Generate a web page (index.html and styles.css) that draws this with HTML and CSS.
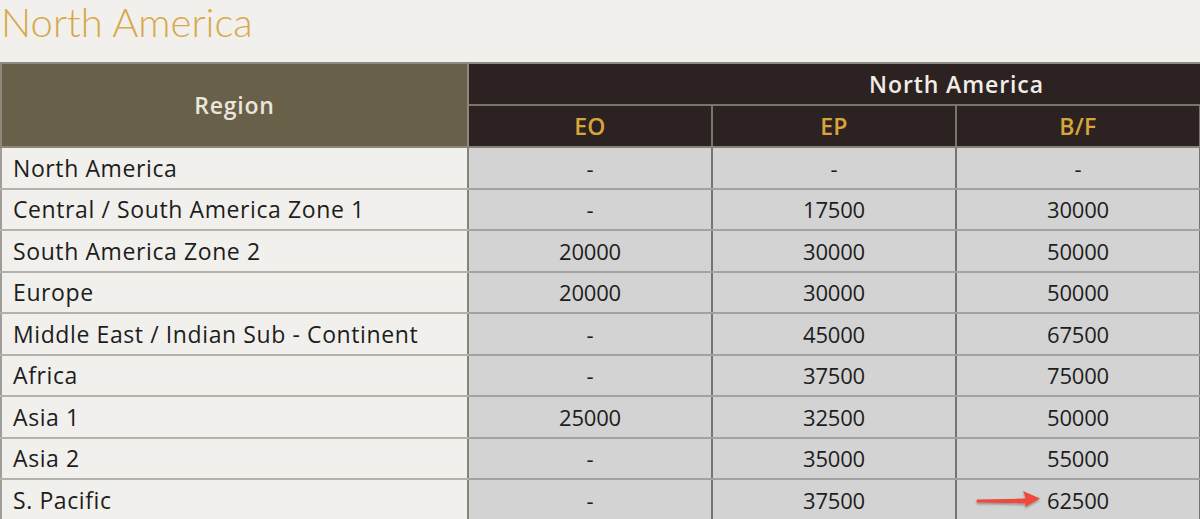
FILE: index.html
```html
<!DOCTYPE html>
<html lang="en">
<head>
<meta charset="utf-8">
<title>North America</title>
<link rel="stylesheet" href="styles.css">
</head>
<body>
<h1 class="title">North America</h1>
<div class="table-wrap">
<table class="award">
  <colgroup>
    <col class="c-region"><col class="c-data"><col class="c-data"><col class="c-data"><col class="c-data">
  </colgroup>
  <thead>
    <tr class="h1row">
      <th class="region-h" rowspan="2">Region</th>
      <th class="group-h" colspan="4">North America</th>
    </tr>
    <tr class="h2row">
      <th class="sub-h">EO</th>
      <th class="sub-h">EP</th>
      <th class="sub-h">B/F</th>
      <th class="sub-h"></th>
    </tr>
  </thead>
  <tbody>
    <tr><td class="reg">North America</td><td>-</td><td>-</td><td>-</td><td></td></tr>
    <tr><td class="reg">Central / South America Zone 1</td><td>-</td><td>17500</td><td>30000</td><td></td></tr>
    <tr><td class="reg">South America Zone 2</td><td>20000</td><td>30000</td><td>50000</td><td></td></tr>
    <tr><td class="reg">Europe</td><td>20000</td><td>30000</td><td>50000</td><td></td></tr>
    <tr><td class="reg">Middle East / Indian Sub - Continent</td><td>-</td><td>45000</td><td>67500</td><td></td></tr>
    <tr><td class="reg">Africa</td><td>-</td><td>37500</td><td>75000</td><td></td></tr>
    <tr><td class="reg">Asia 1</td><td>25000</td><td>32500</td><td>50000</td><td></td></tr>
    <tr><td class="reg">Asia 2</td><td>-</td><td>35000</td><td>55000</td><td></td></tr>
    <tr><td class="reg">S. Pacific</td><td>-</td><td>37500</td><td class="marked">62500<svg class="arrow" width="70" height="24" viewBox="0 0 70 24"><defs><filter id="sh" x="-20%" y="-50%" width="140%" height="200%"><feDropShadow dx="0" dy="1.5" stdDeviation="1.2" flood-color="#000" flood-opacity="0.35"/></filter></defs><g filter="url(#sh)"><path d="M3 11.4 Q2 13 3 14.6 L52 15.4 L52 10.6 Z" fill="#ef493e"/><path d="M49 3 L66 10.5 L51 19 Q53 11 49 3 Z" fill="#ef493e"/></g></svg></td><td></td></tr>
  </tbody>
</table>
</div>
</body>
</html>
```
FILE: styles.css
```css
html, body {
  margin: 0;
  padding: 0;
}
body {
  background: #f1f0ec;
  overflow: hidden;
  width: 1200px;
  height: 519px;
  font-family: "Open Sans", "Liberation Sans", sans-serif;
}
.title {
  margin: 0;
  height: 62px;
  padding-left: 1px;
  font-family: Lato, "Liberation Sans", sans-serif;
  font-weight: 300;
  font-size: 40px;
  line-height: 44px;
  color: #d8a84c;
}
.table-wrap {
  width: 1200px;
  overflow: hidden;
}
.award {
  width: 1443px;
  table-layout: fixed;
  border-collapse: collapse;
  font-size: 22px;
  color: #1d1d1d;
}
.c-region { width: 467px; }
.c-data { width: 244px; }
.award th {
  font-weight: 600;
  font-size: 23px;
  padding: 0;
  text-align: center;
  vertical-align: middle;
}
.h1row, .h2row { height: 42px; }
.region-h {
  background: #686049;
  color: #ebe6db;
  border: 2px solid #8d877c;
  border-top-color: #8f8b84;
  letter-spacing: 0.8px;
}
.group-h {
  background: #2b2221;
  color: #f1ede6;
  border-top: 2px solid #8f8b84;
  border-bottom: 2px solid #7a7470;
  border-left: 2px solid #8d877c;
  letter-spacing: 0.9px;
}
.sub-h {
  background: #2b2221;
  color: #d9a53b;
  border-left: 2px solid #7a7470;
  border-bottom: 2px solid #86827c;
  letter-spacing: 0.3px;
}
.award tbody tr { height: 41.5px; }
.award td {
  padding: 0;
  text-align: center;
  vertical-align: middle;
  background: #d3d3d3;
  border-left: 2px solid #77736f;
  border-bottom: 2px solid #a3a2a0;
  letter-spacing: -0.2px;
}
.award td.reg {
  background: #f1f0ec;
  text-align: left;
  padding-left: 11px;
  font-size: 23px;
  letter-spacing: 0.6px;
  border-left: 2px solid #a09d98;
  border-right: 2px solid #86827c;
  border-bottom: 2px solid #b3b1ac;
  white-space: nowrap;
}
.marked {
  position: relative;
}
.arrow {
  position: absolute;
  left: 17px;
  top: 8px;
}
```
